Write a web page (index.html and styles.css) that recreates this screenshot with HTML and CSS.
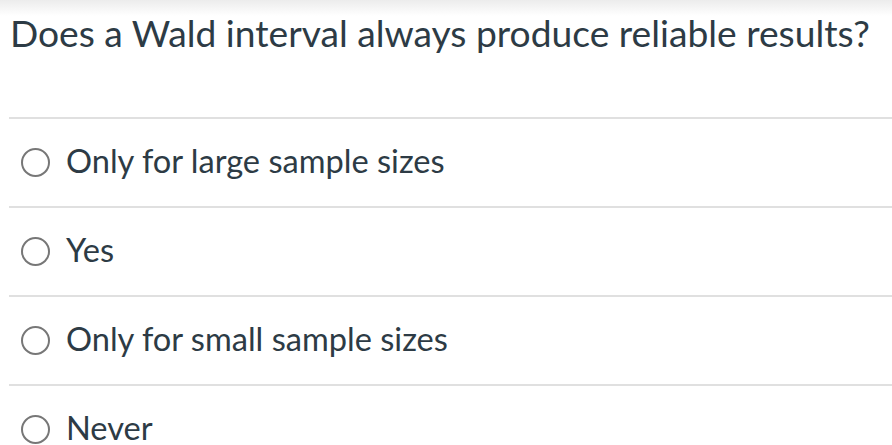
FILE: index.html
```html
<!DOCTYPE html>
<html lang="en">
<head>
<meta charset="utf-8">
<title>Quiz question</title>
<link rel="stylesheet" href="styles.css">
</head>
<body>
<div class="top-shade"></div>
<main class="question">
  <h1 class="question-text">Does a Wald interval always produce reliable results?</h1>
  <ul class="answers">
    <li class="answer"><span class="radio"></span><span class="label">Only for large sample sizes</span></li>
    <li class="answer"><span class="radio"></span><span class="label">Yes</span></li>
    <li class="answer"><span class="radio"></span><span class="label">Only for small sample sizes</span></li>
    <li class="answer"><span class="radio"></span><span class="label">Never</span></li>
  </ul>
</main>
</body>
</html>
```

FILE: styles.css
```css
html, body {
  margin: 0;
  padding: 0;
  background: #ffffff;
  overflow: hidden;
}

body {
  font-family: Lato, "Open Sans", sans-serif;
  color: #2d3b45;
  width: 892px;
  height: 445px;
}

.top-shade {
  height: 16px;
  background: linear-gradient(#ececec, #ffffff);
}

.question {
  padding-left: 9px;
}

.question-text {
  margin: -5.5px 0 0 0;
  padding-left: 1px;
  font-size: 37.2px;
  font-weight: 400;
  line-height: 44px;
  white-space: nowrap;
}

.answers {
  list-style: none;
  margin: 62.5px 0 0 0;
  padding: 0;
}

.answer {
  height: 87px;
  border-top: 2px solid #e0e0e0;
  display: flex;
  align-items: center;
}

.radio {
  box-sizing: border-box;
  width: 29px;
  height: 29px;
  margin-left: 12px;
  border: 2px solid #777777;
  border-radius: 50%;
  flex: none;
}

.label {
  margin: 0 0 4px 16px;
  font-size: 32.6px;
  line-height: 32px;
  white-space: nowrap;
}
```
